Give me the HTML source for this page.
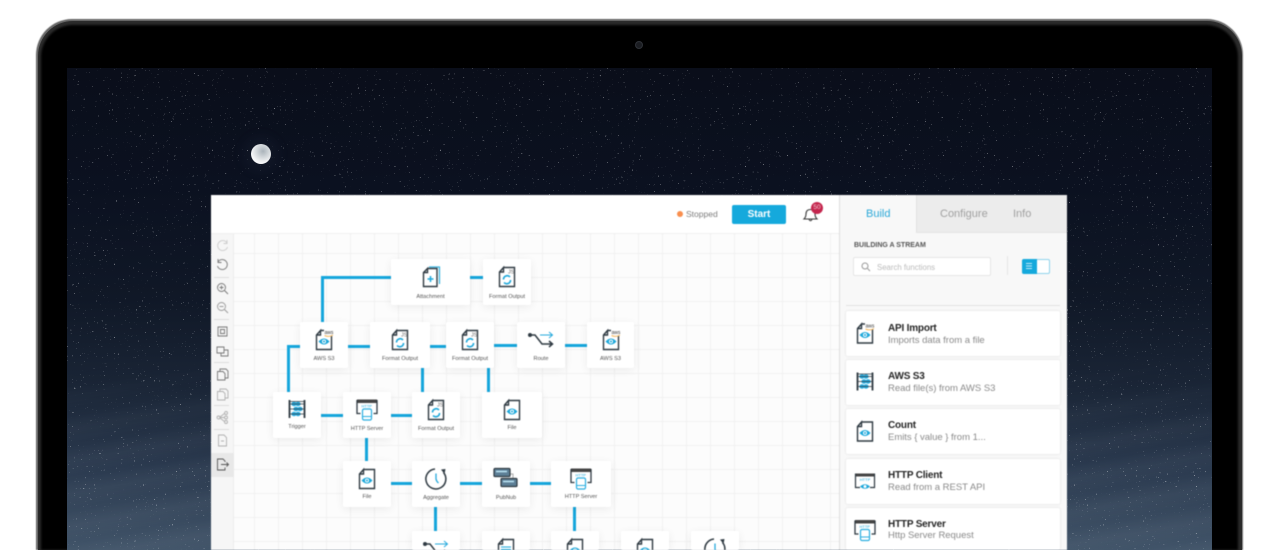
<!DOCTYPE html>
<html><head><meta charset="utf-8">
<style>
html,body{margin:0;padding:0;width:1280px;height:550px;overflow:hidden;background:#fff;font-family:"Liberation Sans",sans-serif}
div,svg,span{position:absolute;box-sizing:border-box}
#root{left:0;top:0;width:1280px;height:550px;overflow:hidden;background:#fff}
#b1{left:36px;top:19px;width:1207px;height:531px;border-radius:36px 36px 0 0;background:#666;filter:blur(.5px)}
#b2{left:37.500px;top:20.500px;width:1204px;height:529.500px;border-radius:35px 35px 0 0;background:#2b2b2b}
#b3{left:41px;top:25px;width:1197px;height:525px;border-radius:32px 32px 0 0;background:#000;filter:blur(1px)}
#screen{left:67px;top:68px;width:1145px;height:482px;overflow:hidden;background:linear-gradient(180deg,#0a0e1a 0,#0b1120 25%,#101827 48%,#1a2536 66%,#2a394e 82%,#415469 100%)}
#band{left:0;top:280px;width:1145px;height:202px;background:repeating-linear-gradient(170deg,rgba(255,255,255,0) 0,rgba(255,255,255,.03) 16px,rgba(255,255,255,0) 32px);-webkit-mask-image:linear-gradient(180deg,transparent,#000 50%)}
#moon{left:184px;top:76px;width:20px;height:20px;border-radius:50%;background:radial-gradient(circle at 60% 36%,#aab3ba 0,#d2d7da 34%,#f6f7f8 66%,#fff 100%);box-shadow:0 0 14px 8px rgba(120,140,170,.06)}
#cam{left:635px;top:41px;width:8px;height:8px;border-radius:50%;background:#1b1d22;border:1px solid #2f3238}
#app{left:211px;top:195px;width:856px;height:355px;overflow:hidden;background:#fff;filter:blur(.4px)}
#top{left:0;top:0;width:628px;height:39px;background:#fff;border-bottom:1px solid #f0f0f0}
#side{left:0;top:39px;width:23px;height:316px;background:#f6f6f6;border-right:1px solid #ececec}
#act{left:0;top:219px;width:23px;height:24px;background:#e8e8e8}
.sep{left:3px;width:15px;height:1px;background:#ddd}
#side svg{left:5px;width:13px;height:13px;fill:none;stroke:#9a9a9a;stroke-width:.9}
#canvas{left:23px;top:39px;width:605px;height:316px;background-color:#fcfcfc;background-image:linear-gradient(#f1f1f1 1px,transparent 1px),linear-gradient(90deg,#f1f1f1 1px,transparent 1px);background-size:24px 24px;background-position:-4px 19px}
#panel{left:628px;top:0;width:228px;height:355px;overflow:hidden;background:#f8f8f8;border-left:1px solid #ddd}
#tabs{left:76px;top:0;width:151px;height:38px;background:#ececec;border-bottom:1px solid #e6e6e6;border-left:1px solid #e2e2e2}
.t{font-size:11px;white-space:nowrap;line-height:14px}
.card{left:6px;width:214px;height:45px;background:#fff;border-radius:2px;box-shadow:0 0 2px rgba(0,0,0,.13)}
.card b{position:absolute;left:42px;top:10px;font-size:10px;line-height:13px;font-weight:bold;color:#262626;white-space:nowrap;letter-spacing:-.2px}
.card span{left:42px;top:23px;font-size:9.500px;line-height:12px;color:#8a8a8a;white-space:nowrap;letter-spacing:-.02px}
.card svg{left:9px;top:10px;width:20px;height:25px}
.n{position:absolute;background:#fff;height:46px;border-radius:2px;box-shadow:0 2px 9px rgba(0,0,0,.07)}
.n span{left:0;width:100%;top:33px;text-align:center;font-size:5.600px;line-height:8px;color:#555;white-space:nowrap}
.n svg{left:50%;margin-left:-10px;top:7px;width:20px;height:22px}
.n.c{height:19px;overflow:hidden}
.l{background:#15a6dc;position:absolute}
svg,symbol{overflow:visible}
</style></head><body>
<div id="root">
<svg width="0" height="0" style="left:0;top:0">
<defs>
<filter id="st" x="0" y="0" width="100%" height="100%"><feTurbulence type="fractalNoise" baseFrequency="0.55" numOctaves="2" seed="7"/><feColorMatrix values="0 0 0 0 1 0 0 0 0 1 0 0 0 0 1 0 0 0 18 -13.900"/><feGaussianBlur stdDeviation=".3"/></filter>
<symbol id="f" viewBox="0 0 20 22"><path d="M6.500 1.500H17.500V20.500H2.500V6L6.500 1.500V6H2.500" fill="#fff" stroke="#2f3a42" stroke-width="1.400"/></symbol>
<symbol id="eye" viewBox="0 0 20 22"><use href="#f"/><path d="M4.500 12.500Q10 6.500 15.500 12.500Q10 18.500 4.500 12.500Z" fill="#1ca7da"/><circle cx="10" cy="12.500" r="2" fill="#fff"/><circle cx="10" cy="12.500" r="1" fill="#1ca7da"/></symbol>
<symbol id="js" viewBox="0 0 20 22"><use href="#f"/><text x="11" y="7.500" font-size="5.500" fill="#666" font-family="Liberation Sans">JS</text><path d="M6.500 13.500A3.700 3.700 0 0 1 13 11M13.500 14A3.700 3.700 0 0 1 7 16.500" fill="none" stroke="#1ca7da" stroke-width="1.600"/></symbol>
<symbol id="aws" viewBox="0 0 20 22"><use href="#eye"/><rect x="10" y="0" width="10" height="7" fill="#fff"/><text x="10.500" y="5" font-size="5" fill="#333" font-family="Liberation Sans">aws</text><path d="M10.500 6.500Q15 8.500 19 6" fill="none" stroke="#f5b75c" stroke-width="1"/></symbol>
<symbol id="att" viewBox="0 0 20 22"><path d="M8 1H18.500V18" fill="none" stroke="#38b3df" stroke-width="1.200"/><path d="M6.500 2.500H16V20.500H2.500V6.500L6.500 2.500V6.500H2.500" fill="#fff" stroke="#2f3a42" stroke-width="1.400"/><path d="M9.500 10V16M6.500 13H12.500" stroke="#1ca7da" stroke-width="1.500"/></symbol>
<symbol id="trig" viewBox="0 0 20 22"><g fill="#27ace0"><ellipse cx="7" cy="5" rx="2.700" ry="2.200"/><ellipse cx="11" cy="5" rx="2.700" ry="2.200"/><ellipse cx="9" cy="10" rx="2.700" ry="2.200"/><ellipse cx="13" cy="10" rx="2.700" ry="2.200"/><ellipse cx="7" cy="15" rx="2.700" ry="2.200"/><ellipse cx="11" cy="15" rx="2.700" ry="2.200"/></g><path d="M2.500 1V19M17.500 1V19" fill="none" stroke="#2f3a42" stroke-width="1.800"/><path d="M2.500 2.500H17.500M2.500 5H17.500M2.500 10H17.500M2.500 15H17.500" fill="none" stroke="#2f3a42" stroke-width=".8"/></symbol>
<symbol id="srv" viewBox="0 0 20 22"><rect x="0" y="0.500" width="20" height="3.500" fill="#444"/><path d="M0 1V14.500H3.500M20 1V14.500H16.500" fill="none" stroke="#2f3a42" stroke-width="1.300"/><text x="4.500" y="8.500" font-size="4" fill="#1ca7da" font-family="Liberation Sans">HTTP</text><rect x="5.500" y="10" width="9" height="11" rx="1.500" fill="#fff" stroke="#2aaee0" stroke-width="1.200"/><path d="M5.500 17.500H14.500" stroke="#2aaee0"/></symbol>
<symbol id="cli" viewBox="0 0 20 22"><rect x="0.500" y="3" width="19" height="3" fill="#444"/><path d="M0.500 3V17H5M19.500 3V17H15" fill="none" stroke="#2f3a42" stroke-width="1.200"/><text x="4.800" y="10.500" font-size="4" fill="#1ca7da" font-family="Liberation Sans">HTTP</text><path d="M5 16Q10 11.500 15 16Q10 20.500 5 16Z" fill="#1ca7da"/><circle cx="10" cy="16" r="1.500" fill="#fff"/></symbol>
<symbol id="agg" viewBox="0 0 20 22"><path d="M17.500 4.500A10 10 0 1 1 9 1" fill="none" stroke="#2f3a42" stroke-width="1.500"/><path d="M15 1.500L19.500 1L18.500 6Z" fill="#2f3a42"/><path d="M10 5.500V11Q10.500 13.500 12.500 15" fill="none" stroke="#25a9dc" stroke-width="1.300"/></symbol>
<symbol id="pub" viewBox="0 0 20 22"><path d="M12 6H17V11" fill="none" stroke="#aaa" stroke-width="1"/><g fill="#5d7f96" stroke="#2f3a42" stroke-width="1.200"><rect x="-2" y="0.500" width="16" height="8" rx="1"/><rect x="5" y="10.500" width="16" height="8" rx="1"/></g><path d="M0 3.500H11M7 13.500H18" stroke="#bfe8f7" stroke-width="1.500"/></symbol>
<symbol id="rt" viewBox="0 0 20 22"><circle cx="-1" cy="6" r="2" fill="#2f3a42"/><path d="M0 6H4L11 15H21M18 12L21.500 15L18 18" fill="none" stroke="#2f3a42" stroke-width="1.500"/><path d="M9 6H21M18 3L21.500 6L18 9" fill="none" stroke="#25a9dc" stroke-width="1"/></symbol>
<symbol id="doc" viewBox="0 0 20 22"><use href="#f"/><path d="M5 9H15M5 11.500H15M5 14H15M5 16.500H15" stroke="#1ca7da" stroke-width="1.100"/></symbol>
</defs></svg>

<div id="b1"></div><div id="b2"></div><div id="b3"></div>
<div id="cam"></div>
<div id="screen">
 <svg style="left:0;top:0;opacity:.55" width="1145" height="482"><rect width="1145" height="482" filter="url(#st)"/></svg>
 <div id="band"></div><div id="moon"></div>
</div>

<div id="app">
 <div id="canvas"></div>
 <div id="top">
  <div style="left:466px;top:16px;width:6px;height:6px;border-radius:50%;background:#f98f4e"></div>
  <div class="t" style="left:475px;top:12px;font-size:8.500px;color:#7d7d7d">Stopped</div>
  <div style="left:521px;top:10px;width:54px;height:19px;background:#15a9dc;border-radius:2px"></div>
  <div class="t" style="left:521px;top:13px;width:54px;text-align:center;color:#fff;font-weight:bold;font-size:10px">Start</div>
  <svg style="left:592px;top:12px;width:15px;height:15px" viewBox="0 0 15 15" fill="none" stroke="#3a3a3a" stroke-width="1.100"><path d="M1 12Q3 10 3 7Q3 2.500 7.500 2.500Q12 2.500 12 7Q12 10 14 12ZM6 12.500Q7.500 15 9 12.500"/></svg>
  <div style="left:600px;top:7px;width:12px;height:12px;border-radius:50%;background:#c4264e"></div>
  <div class="t" style="left:600px;top:7px;width:12px;text-align:center;color:#f5c8d2;font-size:6.500px;line-height:12px">50</div>
 </div>
 <div id="side">
  <svg style="top:5px" viewBox="0 0 13 13"><path d="M11 4A5 5 0 1 0 11.500 8M11 1V4.500H7.500" style="stroke:#ccc"/></svg>
  <svg style="top:24px" viewBox="0 0 13 13"><path d="M2 4A5 5 0 1 1 1.500 8M2 1V4.500H5.500" style="stroke:#777"/></svg>
  <div class="sep" style="top:43px"></div>
  <svg style="top:48px" viewBox="0 0 13 13"><circle cx="5.500" cy="5.500" r="4" style="stroke:#777"/><path d="M8.500 8.500L12 12M3.500 5.500H7.500M5.500 3.500V7.500" style="stroke:#777"/></svg>
  <svg style="top:67px" viewBox="0 0 13 13"><circle cx="5.500" cy="5.500" r="4"/><path d="M8.500 8.500L12 12M3.500 5.500H7.500"/></svg>
  <div class="sep" style="top:85px"></div>
  <svg style="top:91px" viewBox="0 0 13 13"><path d="M2 2H11V11H2ZM4.500 4.500H8.500V8.500H4.500Z" style="stroke:#777"/></svg>
  <svg style="top:111px" viewBox="0 0 13 13"><path d="M1 2H8V8H1ZM5 8V11H12V5H8" style="stroke:#777"/></svg>
  <div class="sep" style="top:128px"></div>
  <svg style="top:134px" viewBox="0 0 13 13"><path d="M4 3V1H10L12 3V10H9M1.500 3.500H7L9 5.500V12H1.500Z" style="stroke:#777"/></svg>
  <svg style="top:154px" viewBox="0 0 13 13"><path d="M4 3V1H10L12 3V10H9M1.500 3.500H7L9 5.500V12H1.500Z" style="stroke:#b0b0b0"/></svg>
  <div class="sep" style="top:171px"></div>
  <svg style="top:177px" viewBox="0 0 13 13"><circle cx="2.500" cy="6.500" r="1.500" style="stroke:#b0b0b0"/><circle cx="10" cy="2" r="1.500" style="stroke:#b0b0b0"/><circle cx="10" cy="6.500" r="1.500" style="stroke:#b0b0b0"/><circle cx="10" cy="11" r="1.500" style="stroke:#b0b0b0"/><path d="M4 6.500H8.500M4 6L8.500 2.500M4 7L8.500 10.500" style="stroke:#b0b0b0"/></svg>
  <div class="sep" style="top:195px"></div>
  <svg style="top:200px" viewBox="0 0 13 13"><path d="M2.500 1H8L10.500 3.500V12H2.500ZM5 7H8" style="stroke:#b0b0b0"/></svg>
  <div id="act"></div>
  <svg style="top:224px" viewBox="0 0 13 13"><path d="M9 4V3L7 1H1.500V12H9V9.500M5 6.500H12.500M10.500 4.500L12.500 6.500L10.500 8.500" style="stroke:#555"/></svg>
 </div>
 <div id="panel">
  <div id="tabs"></div>
  <div class="t" style="left:26px;top:12px;color:#2aa8d8">Build</div>
  <div class="t" style="left:100px;top:12px;color:#a0a0a0">Configure</div>
  <div class="t" style="left:173px;top:12px;color:#a0a0a0">Info</div>
  <div class="t" style="left:14px;top:45px;font-size:7px;line-height:12px;color:#555;font-weight:bold">BUILDING A STREAM</div>
  <div style="left:13px;top:62px;width:138px;height:19px;background:#fff;border:1px solid #e6e6e6;border-radius:2px"></div>
  <svg style="left:21px;top:67px;width:10px;height:10px" viewBox="0 0 10 10" fill="none" stroke="#999"><circle cx="4" cy="4" r="3"/><path d="M6.500 6.500L9 9"/></svg>
  <div class="t" style="left:37px;top:66px;font-size:7.800px;color:#bbb">Search functions</div>
  <div style="left:167px;top:61px;width:1px;height:19px;background:#e6e6e6"></div>
  <div style="left:182px;top:64px;width:28px;height:15px;background:#fff;border:1px solid #8fd3ec;border-radius:2px"></div>
  <div style="left:182px;top:64px;width:15px;height:15px;background:#15a9dc;border-radius:2px 0 0 2px"></div>
  <div style="left:186px;top:68px;width:6px;height:7px;background:repeating-linear-gradient(#bfe8f7 0,#bfe8f7 1px,transparent 1px,transparent 2.500px)"></div>
  <div style="left:6px;top:110px;width:214px;height:1px;background:#e2e2e2"></div>

  <div class="card" style="top:116px"><svg><use href="#aws"/></svg><b style="top:11px">API Import</b><span style="top:24px">Imports data from a file</span></div>
  <div class="card" style="top:165px"><svg><use href="#trig"/></svg><b>AWS S3</b><span>Read file(s) from AWS S3</span></div>
  <div class="card" style="top:214px"><svg><use href="#eye"/></svg><b>Count</b><span>Emits { value } from 1...</span></div>
  <div class="card" style="top:264px"><svg><use href="#cli"/></svg><b>HTTP Client</b><span>Read from a REST API</span></div>
  <div class="card" style="top:313px;height:42px"><svg><use href="#srv"/></svg><b>HTTP Server</b><span style="top:22px">Http Server Request</span></div>
 </div>
</div>

<div style="left:211px;top:195px;width:627px;height:355px;overflow:hidden;filter:blur(.4px)">
 <div style="left:-211px;top:-195px;width:1280px;height:550px">
  <div class="l" style="left:321px;top:276px;width:70px;height:3px"></div>
  <div class="l" style="left:321px;top:276px;width:3px;height:46px"></div>
  <div class="l" style="left:470px;top:276px;width:13px;height:3px"></div>
  <div class="l" style="left:288px;top:345px;width:12px;height:3px"></div>
  <div class="l" style="left:287px;top:345px;width:3px;height:47px"></div>
  <div class="l" style="left:348px;top:345px;width:22px;height:3px"></div>
  <div class="l" style="left:430px;top:345px;width:16px;height:3px"></div>
  <div class="l" style="left:494px;top:344px;width:23px;height:3px"></div>
  <div class="l" style="left:565px;top:344px;width:22px;height:3px"></div>
  <div class="l" style="left:421px;top:368px;width:3px;height:24px"></div>
  <div class="l" style="left:487px;top:368px;width:3px;height:24px"></div>
  <div class="l" style="left:321px;top:414px;width:22px;height:3px"></div>
  <div class="l" style="left:391px;top:414px;width:21px;height:3px"></div>
  <div class="l" style="left:365px;top:438px;width:3px;height:23px"></div>
  <div class="l" style="left:391px;top:482px;width:21px;height:3px"></div>
  <div class="l" style="left:460px;top:482px;width:22px;height:3px"></div>
  <div class="l" style="left:530px;top:482px;width:21px;height:3px"></div>
  <div class="l" style="left:434px;top:507px;width:3px;height:24px"></div>
  <div class="l" style="left:573px;top:507px;width:3px;height:24px"></div>

  <div class="n" style="left:391px;top:259px;width:79px"><svg><use href="#att"/></svg><span style="top:34px">Attachment</span></div>
  <div class="n" style="left:483px;top:259px;width:48px"><svg><use href="#js"/></svg><span style="top:34px">Format Output</span></div>
  <div class="n" style="left:300px;top:322px;width:48px"><svg><use href="#aws"/></svg><span>AWS S3</span></div>
  <div class="n" style="left:370px;top:322px;width:60px"><svg><use href="#js"/></svg><span>Format Output</span></div>
  <div class="n" style="left:446px;top:322px;width:48px"><svg><use href="#js"/></svg><span>Format Output</span></div>
  <div class="n" style="left:517px;top:322px;width:48px"><svg><use href="#rt"/></svg><span>Route</span></div>
  <div class="n" style="left:587px;top:322px;width:47px"><svg><use href="#aws"/></svg><span>AWS S3</span></div>
  <div class="n" style="left:273px;top:392px;width:48px"><svg><use href="#trig"/></svg><span style="top:31px">Trigger</span></div>
  <div class="n" style="left:343px;top:392px;width:48px"><svg><use href="#srv"/></svg><span>HTTP Server</span></div>
  <div class="n" style="left:412px;top:392px;width:48px"><svg><use href="#js"/></svg><span>Format Output</span></div>
  <div class="n" style="left:482px;top:392px;width:60px"><svg><use href="#eye"/></svg><span style="top:32px">File</span></div>
  <div class="n" style="left:343px;top:461px;width:48px"><svg><use href="#eye"/></svg><span style="top:32px">File</span></div>
  <div class="n" style="left:412px;top:461px;width:48px"><svg><use href="#agg"/></svg><span>Aggregate</span></div>
  <div class="n" style="left:482px;top:461px;width:48px"><svg><use href="#pub"/></svg><span>PubNub</span></div>
  <div class="n" style="left:551px;top:461px;width:60px"><svg><use href="#srv"/></svg><span style="top:32px">HTTP Server</span></div>
  <div class="n c" style="left:412px;top:531px;width:48px"><svg><use href="#rt"/></svg></div>
  <div class="n c" style="left:482px;top:531px;width:48px"><svg><use href="#doc"/></svg></div>
  <div class="n c" style="left:551px;top:531px;width:48px"><svg><use href="#eye"/></svg></div>
  <div class="n c" style="left:621px;top:531px;width:48px"><svg><use href="#eye"/></svg></div>
  <div class="n c" style="left:691px;top:531px;width:48px"><svg><use href="#agg"/></svg></div>
 </div>
</div>
</div>
</body></html>
